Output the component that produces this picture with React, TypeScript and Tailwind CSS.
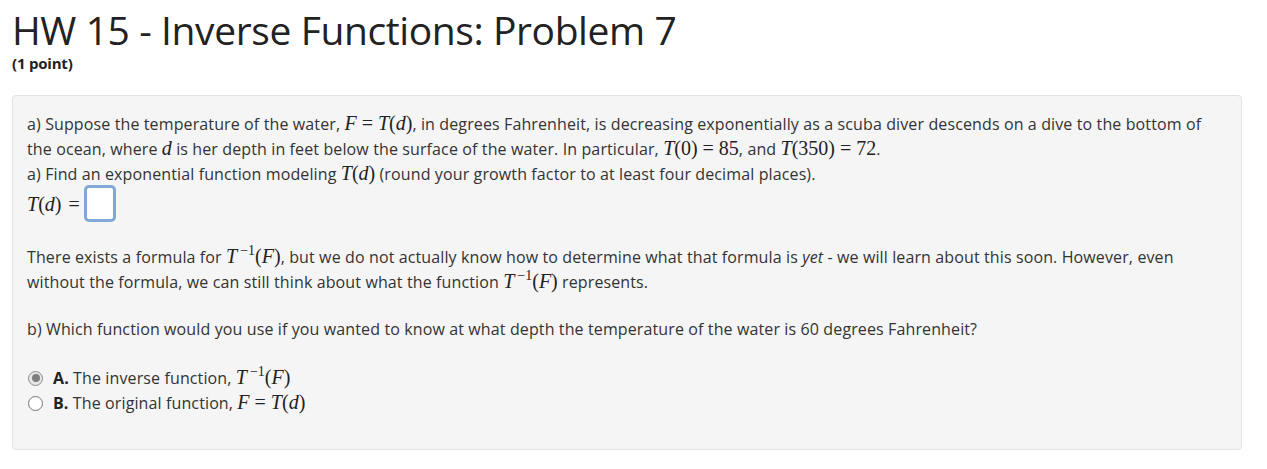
import React from "react";

function M({ children }: { children: React.ReactNode }) {
  return <span className="font-['Liberation_Serif',serif] text-[20px] leading-none tracking-normal text-[#222]">{children}</span>;
}

function I({ children }: { children: React.ReactNode }) {
  return <span className="italic">{children}</span>;
}

function Eq() {
  return <span className="mx-[5px]">=</span>;
}

function Inv() {
  return (
    <M>
      <I>T</I>
      <span className="relative -top-[8px] ml-[3px] text-[14px] leading-none">−1</span>(<I>F</I>)
    </M>
  );
}

export default function App() {
  return (
    <div className="min-h-[469px] bg-white px-3 pt-[8px] font-['Open_Sans',sans-serif] text-[#333]">
      <h1 className="text-[39px] leading-[44px] tracking-[-0.4px] text-[#222]">HW 15 - Inverse Functions: Problem 7</h1>
      <p className="text-[15px] font-bold tracking-[-0.2px] text-[#222]">(1 point)</p>

      <div className="mt-[20px] mr-[13px] h-[355px] rounded-[4px] border border-[#e3e3e3] bg-[#f5f5f5] pl-[14px] pr-[20px] pt-[16px] text-[16px] leading-[25px] tracking-[0.12px]">
        <p>
          a) Suppose the temperature of the water,{" "}
          <M>
            <I>F</I>
            <Eq />
            <I>T</I>(<I>d</I>)
          </M>
          , in degrees Fahrenheit, is decreasing exponentially as a scuba diver descends on a dive to the bottom of the
          ocean, where{" "}
          <M>
            <I>d</I>
          </M>{" "}
          is her depth in feet below the surface of the water. In particular,{" "}
          <M>
            <I>T</I>(0)
            <Eq />
            85
          </M>
          , and{" "}
          <M>
            <I>T</I>(350)
            <Eq />
            72
          </M>
          .
        </p>
        <p>
          a) Find an exponential function modeling{" "}
          <M>
            <I>T</I>(<I>d</I>)
          </M>{" "}
          (round your growth factor to at least four decimal places).
        </p>
        <div className="flex h-[34px] items-center">
          <M>
            <I>T</I>(<I>d</I>)
            <span className="ml-[7px]">=</span>
          </M>
          <span className="ml-[4px] h-[37px] w-[32px] rounded-[5px] border-[3px] border-[#80a9d6] bg-white" />
        </div>

        <p className="mt-[24px]">
          There exists a formula for <Inv />, but we do not actually know how to determine what that formula is{" "}
          <span className="italic">yet</span> - we will learn about this soon. However, even without the formula, we
          can still think about what the function <Inv /> represents.
        </p>

        <p className="mt-[22px]">
          b) Which function would you use if you wanted to know at what depth the temperature of the water is 60
          degrees Fahrenheit?
        </p>

        <div className="mt-[24px] flex flex-col">
          <label className="flex items-center gap-[10px]">
            <span className="ml-[1px] flex h-[15px] w-[15px] items-center justify-center rounded-full border border-[#8d8d8d] bg-[#e6e6e6]">
              <span className="h-[8px] w-[8px] rounded-full bg-[#7d7d7d]" />
            </span>
            <span>
              <b className="text-[#222]">A.</b> The inverse function, <Inv />
            </span>
          </label>
          <label className="flex items-center gap-[10px]">
            <span className="ml-[1px] h-[15px] w-[15px] rounded-full border border-[#767676] bg-white" />
            <span>
              <b className="text-[#222]">B.</b> The original function,{" "}
              <M>
                <I>F</I>
                <Eq />
                <I>T</I>(<I>d</I>)
              </M>
            </span>
          </label>
        </div>
      </div>
    </div>
  );
}
